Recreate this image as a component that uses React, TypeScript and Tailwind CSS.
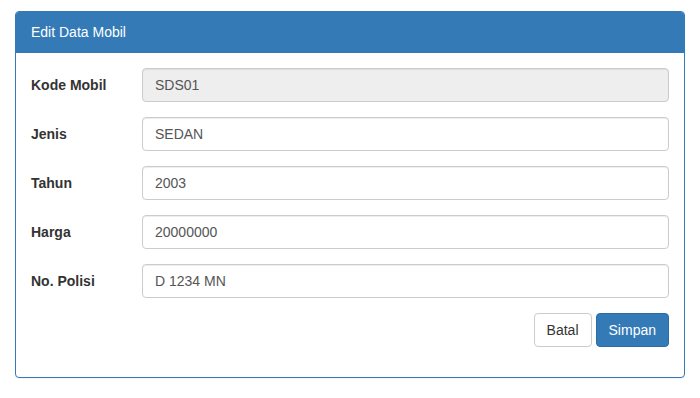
const FIELDS: { label: string; value: string; disabled?: boolean }[] = [
  { label: 'Kode Mobil', value: 'SDS01', disabled: true },
  { label: 'Jenis', value: 'SEDAN' },
  { label: 'Tahun', value: '2003' },
  { label: 'Harga', value: '20000000' },
  { label: 'No. Polisi', value: 'D 1234 MN' },
];

export default function App() {
  return (
    <div className="min-h-[398px] bg-white pt-[11px] pl-[15px] font-['Liberation_Sans',Arial,sans-serif] text-[14px] leading-[20px] text-[#333]">
      <div className="w-[670px] rounded-[4px] border border-[#337ab7] bg-white shadow-[0_1px_1px_rgba(0,0,0,0.05)]">
        <div className="rounded-t-[3px] border-b border-[#337ab7] bg-[#337ab7] px-[15px] py-[10px] text-white">
          Edit Data Mobil
        </div>
        <div className="flex flex-col gap-[15px] px-[15px] pt-[15px] pb-[30px]">
          {FIELDS.map((f) => (
            <div key={f.label} className="flex items-center">
              <label className="w-[111px] shrink-0 font-bold">{f.label}</label>
              <input
                readOnly
                disabled={f.disabled}
                value={f.value}
                className={`h-[34px] w-[527px] rounded-[4px] border border-[#ccc] px-[12px] text-[14px] text-[#555] shadow-[inset_0_1px_1px_rgba(0,0,0,0.075)] outline-none ${
                  f.disabled ? 'bg-[#eee]' : 'bg-white'
                }`}
              />
            </div>
          ))}
          <div className="flex justify-end gap-[4px]">
            <button className="h-[34px] rounded-[4px] border border-[#ccc] bg-white px-[12px] text-[#333]">
              Batal
            </button>
            <button className="h-[34px] rounded-[4px] border border-[#2e6da4] bg-[#337ab7] px-[12px] text-white">
              Simpan
            </button>
          </div>
        </div>
      </div>
    </div>
  );
}
